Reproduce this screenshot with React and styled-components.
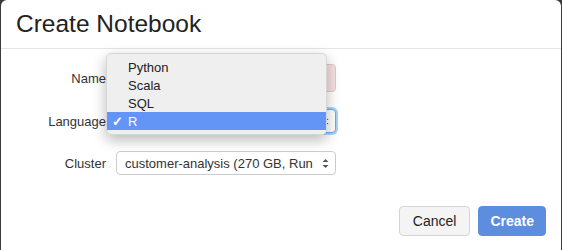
import React from "react";
import styled, { createGlobalStyle } from "styled-components";

const Global = createGlobalStyle`
  html, body { margin: 0; padding: 0; background: #3b3b3b; }
  body { font-family: "Liberation Sans", Arial, Helvetica, sans-serif; color: #333; }
  * { box-sizing: border-box; }
`;

const Modal = styled.div`
  position: relative;
  margin-left: 1px;
  width: 560px;
  height: 250px;
  background: #fff;
  border-radius: 6px 6px 0 0;
  overflow: hidden;
`;

const Header = styled.div`
  height: 49px;
  padding: 0 15px;
  border-bottom: 1px solid #e5e5e5;
  display: flex;
  align-items: center;
`;

const Title = styled.h3`
  margin: 0;
  font-size: 24.5px;
  font-weight: normal;
  color: #222;
  line-height: 1;
  padding-top: 1px;
`;

const Body = styled.div`
  position: relative;
  padding: 15px 0 0 0;
  display: flex;
  flex-direction: column;
`;

const Row = styled.div`
  display: flex;
  align-items: center;
  height: ${(p) => p.$h}px;
  margin-bottom: ${(p) => p.$mb}px;
`;

const Label = styled.label`
  width: 105px;
  text-align: right;
  font-size: 13px;
  color: #333;
`;

const Input = styled.div`
  margin-left: 10px;
  width: 220px;
  height: 28px;
  border: 1px solid #e8c4c4;
  background: #f4e0e0;
  border-radius: 4px;
`;

const Select = styled.div`
  margin-left: 10px;
  width: 220px;
  height: 24px;
  border: 1px solid ${(p) => (p.$focus ? "#66afe9" : "#cccccc")};
  box-shadow: ${(p) => (p.$focus ? "0 0 0 2px rgba(102,175,233,0.55)" : "none")};
  border-radius: 4px;
  background: #fff;
  display: flex;
  align-items: center;
  padding: 0 6px 0 8px;
  font-size: 13px;
  color: #333;
  white-space: nowrap;
  overflow: hidden;
`;

const SelectText = styled.span`
  flex: 1;
  overflow: hidden;
  margin-right: 9px;
`;

const Arrows = () => (
  <svg width="7" height="11" viewBox="0 0 7 11">
    <path d="M0.5 4 L3.5 1 L6.5 4 Z" fill="#555" />
    <path d="M0.5 7 L3.5 10 L6.5 7 Z" fill="#555" />
  </svg>
);

const Menu = styled.ul`
  position: absolute;
  left: 105px;
  top: 4px;
  width: 221px;
  margin: 0;
  padding: 4px 0;
  list-style: none;
  background: #efefef;
  border-radius: 5px;
  border: 1px solid #d6d6d6;
  box-shadow: 0 5px 14px rgba(0, 0, 0, 0.28);
`;

const Item = styled.li`
  height: 18px;
  display: flex;
  align-items: center;
  font-size: 13px;
  color: ${(p) => (p.$active ? "#fff" : "#222")};
  background: ${(p) => (p.$active ? "#6395f6" : "transparent")};
`;

const Check = styled.span`
  width: 21px;
  padding-left: 5px;
  font-size: 13px;
  font-weight: bold;
`;

const Footer = styled.div`
  display: flex;
  justify-content: flex-end;
  gap: 8px;
  padding: 31px 15px 0 0;
`;

const Button = styled.button`
  height: 30px;
  padding: 0 ${(p) => (p.$primary ? 11 : 13)}px;
  font-family: inherit;
  font-size: 14px;
  border-radius: 4px;
  border: 1px solid ${(p) => (p.$primary ? "#5c8ddf" : "#d4d4d4")};
  background: ${(p) => (p.$primary ? "#5c8ddf" : "#f4f4f4")};
  color: ${(p) => (p.$primary ? "#fff" : "#222")};
  font-weight: ${(p) => (p.$primary ? "bold" : "normal")};
`;

export default function App() {
  const langs = ["Python", "Scala", "SQL", "R"];
  return (
    <>
      <Global />
      <Modal>
        <Header>
          <Title>Create Notebook</Title>
        </Header>
        <Body>
          <Row $h={28} $mb={17}>
            <Label>Name</Label>
            <Input />
          </Row>
          <Row $h={24} $mb={18}>
            <Label>Language</Label>
            <Select $focus>
              <SelectText />
              <Arrows />
            </Select>
          </Row>
          <Row $h={24} $mb={0}>
            <Label>Cluster</Label>
            <Select>
              <SelectText>customer-analysis (270 GB, Running)</SelectText>
              <Arrows />
            </Select>
          </Row>
          <Menu>
            {langs.map((l) => (
              <Item key={l} $active={l === "R"}>
                <Check>{l === "R" ? "✓" : ""}</Check>
                {l}
              </Item>
            ))}
          </Menu>
        </Body>
        <Footer>
          <Button>Cancel</Button>
          <Button $primary>Create</Button>
        </Footer>
      </Modal>
    </>
  );
}
